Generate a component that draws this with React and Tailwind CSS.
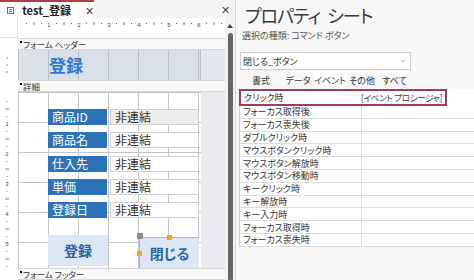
import React from "react";

const jp = { fontFamily: '"Noto Sans CJK JP", "Noto Sans", sans-serif' };

function HRuler() {
  const ticks = [];
  for (let i = 0; i < 28; i++) {
    const x = 1 + i * 7.5;
    if (i % 4 === 0) continue;
    ticks.push(
      i % 2 === 0 ? (
        <line key={i} x1={x} x2={x} y1={4} y2={7} stroke="#555" strokeWidth="0.8" />
      ) : (
        <rect key={i} x={x - 0.5} y={5} width={1} height={1} fill="#666" />
      )
    );
  }
  return (
    <svg width="206" height="20" className="block">
      {ticks}
      {[1, 2, 3, 4, 5, 6].map((n) => (
        <text key={n} x={1 + n * 30} y={9} fontSize="6" fill="#444" textAnchor="middle" fontFamily="Liberation Sans, sans-serif">
          {n}
        </text>
      ))}
    </svg>
  );
}

function VRuler() {
  const marks = [];
  [20, 27, 34].forEach((y) => marks.push(<line key={"h" + y} x1={6} x2={8} y1={y} y2={y} stroke="#777" strokeWidth="0.8" />));
  for (let i = 1; i < 24; i++) {
    const y = 56 + i * 7.5;
    if (i % 4 === 0) continue;
    marks.push(
      i % 2 === 0 ? (
        <line key={i} x1={5} x2={9} y1={y} y2={y} stroke="#666" strokeWidth="0.8" />
      ) : (
        <rect key={i} x={6.5} y={y - 0.5} width={1} height={1} fill="#777" />
      )
    );
  }
  return (
    <svg width="18" height="242" className="block">
      {marks}
      {[1, 2, 3, 4, 5].map((n) => (
        <text key={n} x={7} y={58 + n * 30} fontSize="6" fill="#444" textAnchor="middle" fontFamily="Liberation Sans, sans-serif">
          {n}
        </text>
      ))}
    </svg>
  );
}

function SectionBar({ label }) {
  return (
    <div className="h-[12px] flex items-center bg-[#f8f8f8] border-y border-[#d6d6d6] relative">
      <span className="absolute left-[2px] top-[2px] w-[2px] h-[2px] bg-black" />
      <span className="pl-[5px] text-[8.5px] leading-none text-[#333] whitespace-nowrap">{label}</span>
    </div>
  );
}

const fields = ["商品ID", "商品名", "仕入先", "単価", "登録日"];

const events = [
  "フォーカス取得後",
  "フォーカス喪失後",
  "ダブルクリック時",
  "マウスボタンクリック時",
  "マウスボタン解放時",
  "マウスボタン移動時",
  "キークリック時",
  "キー解放時",
  "キー入力時",
  "フォーカス取得時",
  "フォーカス喪失時",
];

const tabs = [
  { label: "書式", w: "w-[42px]" },
  { label: "データ", w: "w-[32px]" },
  { label: "イベント", w: "w-[32px]", active: true },
  { label: "その他", w: "w-[32px]" },
  { label: "すべて", w: "w-[33px]" },
];

export default function App() {
  return (
    <div className="w-[474px] h-[280px] flex overflow-hidden bg-white [font-feature-settings:'palt']" style={jp}>
      {/* form designer */}
      <div className="w-[235px] flex flex-col bg-[#f3f3f3]">
        <div className="h-[18px] flex items-end">
          <div className="w-[94px] h-[18px] bg-white border-t-2 border-[#b03a48] flex items-center pl-[7px]">
            <div className="w-[9px] h-[7px] border border-[#4a6fa5] flex flex-col justify-center gap-[1px] px-[1px]">
              <div className="h-[1px] bg-[#4a6fa5]" />
              <div className="h-[1px] bg-[#4a6fa5]" />
            </div>
            <span className="ml-[8px] text-[11px] font-bold text-[#222] leading-none whitespace-nowrap">test_登録</span>
            <span className="ml-[14px] text-[11px] text-[#444] leading-none">✕</span>
          </div>
          <div className="flex-1 h-[18px] flex items-center justify-end pr-[5px]">
            <span className="text-[11px] text-[#444] leading-none">✕</span>
          </div>
        </div>
        <div className="flex flex-1 min-h-0">
          <div className="flex-1 flex flex-col min-w-0">
            <div className="h-[20px] flex bg-white">
              <div className="w-[18px] border-r border-b border-[#ddd]" />
              <HRuler />
            </div>
            <div className="flex flex-1 min-h-0">
              <div className="w-[18px] bg-white">
                <VRuler />
              </div>
              <div className="flex-1 flex flex-col min-w-0 bg-[#e9ebee]">
                <SectionBar label="フォーム ヘッダー" />
                <div className="h-[31px] flex">
                  <div className="w-[183px] bg-[#d8dfe9] bg-[linear-gradient(to_right,#b9c0c9_1px,transparent_1px)] bg-[size:30px_30px] border-r-[3px] border-double border-[#b9c0c9] relative">
                    <span className="absolute left-[31px] top-[4px] text-[17px] font-bold leading-[22px] text-[#2f7ad0]">登録</span>
                  </div>
                  <div className="flex-1 bg-[#e4e8ee]" />
                </div>
                <SectionBar label="詳細" />
                <div className="flex-1 flex">
                  <div className="w-[183px] bg-white bg-[linear-gradient(to_right,#c4c4c4_1px,transparent_1px),linear-gradient(to_bottom,#c4c4c4_1px,transparent_1px)] bg-[size:30px_30px] relative">
                    <div className="flex flex-col gap-[7.3px] pt-[17px] pl-[30px]">
                      {fields.map((f, i) => (
                        <div key={f} className="flex h-[16px] gap-[3px]">
                          <div className="w-[59px] bg-[#2e72b8] text-white text-[12px] leading-[16px] pl-[4px]">{f}</div>
                          <div
                            className={`w-[89px] border border-[#cfcfcf] text-[12px] leading-[14px] pl-[4px] text-[#333] ${
                              i === 0 ? "bg-[#ececec]" : "bg-white"
                            }`}
                          >
                            非連結
                          </div>
                        </div>
                      ))}
                    </div>
                    <div className="flex pl-[30px] mt-[17px]">
                      <div className="w-[60px] h-[31px] bg-[#dde7f3] text-[#2d63a5] text-[14px] font-bold flex items-center justify-center">登録</div>
                      <div className="ml-[31px] w-[60px] h-[31px] mt-[2px] bg-[#dde7f3] text-[#2d63a5] text-[14px] font-bold flex items-center justify-center border-l border-t border-[#f5a623] relative">
                        閉じる
                        <span className="absolute -left-[3px] -top-[5px] w-[6px] h-[6px] bg-[#8a8f96]" />
                        <span className="absolute left-[27px] -top-[3px] w-[5px] h-[5px] bg-[#f5a623]" />
                        <span className="absolute -left-[3px] top-[13px] w-[5px] h-[5px] bg-[#f5a623]" />
                      </div>
                    </div>
                  </div>
                  <div className="flex-1 bg-[#e9ebee]" />
                </div>
                <SectionBar label="フォーム フッター" />
              </div>
            </div>
          </div>
          <div className="w-[10px] flex flex-col items-center bg-[#f3f3f3]">
            <svg width="8" height="8" className="mt-[4px]">
              <path d="M1 6 L4 2 L7 6 Z" fill="#444" />
            </svg>
            <div className="w-[5px] flex-1 mt-[3px] bg-[#666] rounded-t-[3px]" />
          </div>
        </div>
      </div>

      {/* property sheet */}
      <div className="flex-1 flex flex-col bg-[#f7f7f7] border-l border-[#d8d8d8] pl-[3px]">
        <div className="flex gap-[7px] text-[18px] leading-none text-[#3a3a3a] pl-[6px] pt-[6px] whitespace-nowrap tracking-[-1px]">
          <span>プロパティ</span>
          <span>シート</span>
        </div>
        <div className="text-[9px] leading-none text-[#555] pl-[3px] mt-[7px] whitespace-nowrap">選択の種類: コマンド ボタン</div>
        <div className="mt-[12px] ml-[1px] w-[171px] h-[18px] bg-white border border-[#cfcfcf] flex items-center">
          <span className="flex-1 text-[9px] text-[#333] pl-[2px] leading-none whitespace-nowrap">閉じる_ボタン</span>
          <svg width="12" height="8" className="mr-[1px]">
            <path d="M4 3 L6 5 L8 3" fill="none" stroke="#999" strokeWidth="0.8" />
          </svg>
        </div>
        <div className="mt-[1px] ml-[1px] w-[171px] h-[18px] flex items-end text-[9px] text-[#333] leading-none whitespace-nowrap">
          {tabs.map((t) => (
            <span key={t.label} className={`${t.w} text-center pb-[4px] pt-[4px] ${t.active ? "bg-white" : ""}`}>
              {t.label}
            </span>
          ))}
        </div>
        <div className="bg-white border-l border-[#cfcfcf] text-[9px] text-[#333] leading-none whitespace-nowrap">
          <div className="h-[17px] flex items-center border-2 border-[#a53a5b] w-[208px] -ml-[1px]">
            <span className="w-[120px] shrink-0 pl-[3px]">クリック時</span>
            <span className="text-[8.5px] tracking-[-0.3px]">[イベント プロシージャ]</span>
          </div>
          {events.map((e) => (
            <div key={e} className="h-[12.8px] flex border-b border-[#dcdcdc]">
              <span className="w-[122px] shrink-0 pl-[3px] border-r border-[#dcdcdc] flex items-center">{e}</span>
              <span className="flex-1" />
            </div>
          ))}
        </div>
      </div>
    </div>
  );
}
